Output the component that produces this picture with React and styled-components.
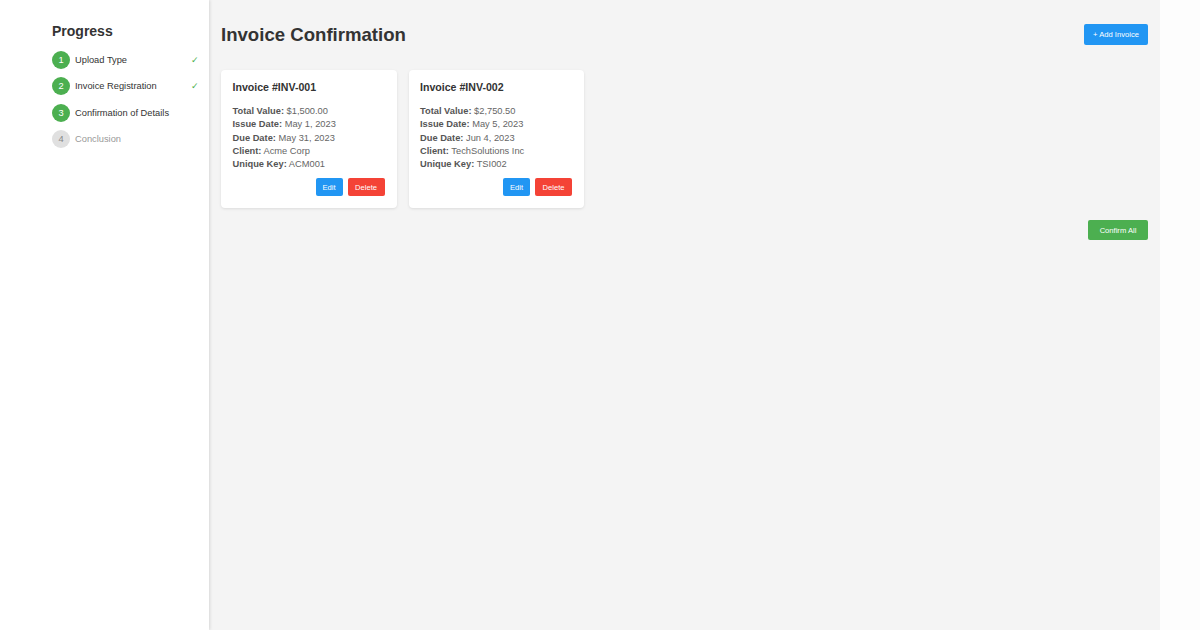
import React from "react";
import styled, { createGlobalStyle } from "styled-components";

const GlobalStyle = createGlobalStyle`
  html, body {
    margin: 0;
    padding: 0;
    background: #fdfdfd;
    font-family: "Liberation Sans", Arial, sans-serif;
  }
`;

const Container = styled.div`
  width: 1160px;
  height: 630px;
  display: flex;
  background-color: #f4f4f4;
`;

const Sidebar = styled.aside`
  width: 147px;
  padding: 0 10px 0 52px;
  background-color: #fff;
  box-shadow: 1px 0 3px rgba(0, 0, 0, 0.12);
  position: relative;
  z-index: 1;
`;

const SideTitle = styled.h2`
  margin: 22px 0 11px;
  font-size: 14px;
  font-weight: bold;
  color: #333;
  line-height: 18px;
`;

const StepList = styled.ul`
  list-style: none;
  margin: 0;
  padding: 0;
  display: flex;
  flex-direction: column;
  gap: 8.3px;
`;

const Step = styled.li`
  display: flex;
  align-items: center;
  height: 18px;
  gap: 5px;
  font-size: 9.3px;
  color: ${(p) => (p.done ? "#333" : "#999")};
`;

const Circle = styled.span`
  width: 18px;
  height: 18px;
  border-radius: 50%;
  display: flex;
  align-items: center;
  justify-content: center;
  font-size: 9.3px;
  font-weight: normal;
  color: ${(p) => (p.done ? "#fff" : "#888")};
  background-color: ${(p) => (p.done ? "#4caf50" : "#e0e0e0")};
  flex-shrink: 0;
`;

const StepLabel = styled.span`
  flex: 1;
`;

const Check = styled.span`
  color: #4caf50;
  font-size: 9px;
  width: 8px;
`;

const Main = styled.main`
  flex: 1;
  padding: 0 12px 0 12px;
`;

const Header = styled.div`
  display: flex;
  justify-content: space-between;
  align-items: center;
  height: 69px;
  padding-bottom: 1px;
`;

const Title = styled.h1`
  margin: 0;
  font-size: 18.6px;
  font-weight: bold;
  color: #333;
`;

const Button = styled.button`
  border: none;
  border-radius: 2px;
  padding: 0;
  height: ${(p) => p.h || 18}px;
  width: ${(p) => p.w}px;
  font-family: inherit;
  font-size: 7.6px;
  color: #fff;
  cursor: pointer;
  background-color: ${(p) =>
    p.kind === "danger" ? "#f44336" : p.kind === "success" ? "#4caf50" : "#2196f3"};
`;

const Cards = styled.div`
  display: flex;
  gap: 12px;
`;

const Card = styled.div`
  width: 152px;
  padding: 11px 12px 12px 11.5px;
  background-color: #fff;
  border-radius: 4px;
  box-shadow: 0 1px 3px rgba(0, 0, 0, 0.1);
`;

const CardTitle = styled.h3`
  margin: 0 0 11px;
  font-size: 10.6px;
  font-weight: bold;
  color: #333;
  line-height: 13px;
`;

const Row = styled.p`
  margin: 0;
  font-size: 9.3px;
  line-height: 13.3px;
  color: #666;

  b {
    color: #555;
  }
`;

const Actions = styled.div`
  display: flex;
  justify-content: flex-end;
  gap: 5px;
  margin-top: 7px;
`;

const Footer = styled.div`
  display: flex;
  justify-content: flex-end;
  margin-top: 12px;
`;

const steps = [
  { n: 1, label: "Upload Type", done: true, check: true },
  { n: 2, label: "Invoice Registration", done: true, check: true },
  { n: 3, label: "Confirmation of Details", done: true },
  { n: 4, label: "Conclusion", done: false },
];

const invoices = [
  {
    id: "INV-001",
    total: "$1,500.00",
    issue: "May 1, 2023",
    due: "May 31, 2023",
    client: "Acme Corp",
    key: "ACM001",
  },
  {
    id: "INV-002",
    total: "$2,750.50",
    issue: "May 5, 2023",
    due: "Jun 4, 2023",
    client: "TechSolutions Inc",
    key: "TSI002",
  },
];

const App = () => {
  return (
    <>
      <GlobalStyle />
      <Container>
        <Sidebar>
          <SideTitle>Progress</SideTitle>
          <StepList>
            {steps.map((s) => (
              <Step key={s.n} done={s.done}>
                <Circle done={s.done}>{s.n}</Circle>
                <StepLabel>{s.label}</StepLabel>
                {s.check && <Check>✓</Check>}
              </Step>
            ))}
          </StepList>
        </Sidebar>
        <Main>
          <Header>
            <Title>Invoice Confirmation</Title>
            <Button w={64} h={21}>+ Add Invoice</Button>
          </Header>
          <Cards>
            {invoices.map((inv) => (
              <Card key={inv.id}>
                <CardTitle>Invoice #{inv.id}</CardTitle>
                <Row><b>Total Value:</b> {inv.total}</Row>
                <Row><b>Issue Date:</b> {inv.issue}</Row>
                <Row><b>Due Date:</b> {inv.due}</Row>
                <Row><b>Client:</b> {inv.client}</Row>
                <Row><b>Unique Key:</b> {inv.key}</Row>
                <Actions>
                  <Button w={27}>Edit</Button>
                  <Button w={37} kind="danger">Delete</Button>
                </Actions>
              </Card>
            ))}
          </Cards>
          <Footer>
            <Button w={60} h={20} kind="success">Confirm All</Button>
          </Footer>
        </Main>
      </Container>
    </>
  );
};

export default App;
